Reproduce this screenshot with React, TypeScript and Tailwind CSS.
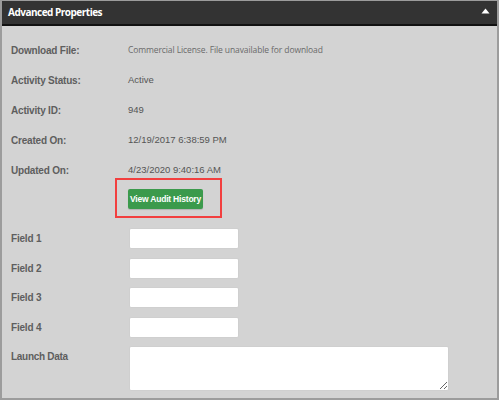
import React from 'react';

const info = [
  { label: 'Download File:', value: 'Commercial License. File unavailable for download', small: true },
  { label: 'Activity Status:', value: 'Active' },
  { label: 'Activity ID:', value: '949' },
  { label: 'Created On:', value: '12/19/2017 6:38:59 PM' },
  { label: 'Updated On:', value: '4/23/2020 9:40:16 AM' },
];

const fields = ['Field 1', 'Field 2', 'Field 3', 'Field 4'];

export default function App() {
  return (
    <div className="w-[499px] h-[401px] overflow-hidden bg-white">
      <div className="w-[499px] h-[400px] border-2 border-t border-[#9c9c9c] bg-[#d3d3d3] flex flex-col">
        {/* header */}
        <div className="h-[25px] shrink-0 bg-[#333333] border-b-2 border-[#111111] flex items-center justify-between pl-[6px] pr-[6px]">
          <span className="text-white font-bold text-[10px] tracking-[-0.5px] font-['Open_Sans',sans-serif]">
            Advanced Properties
          </span>
          <svg width="9" height="6" viewBox="0 0 9 6" className="mr-[1px] mb-[3px]">
            <path d="M0.5 5.5 L4.5 0.5 L8.5 5.5 Z" fill="#ffffff" />
          </svg>
        </div>

        {/* body */}
        <div className="pl-[9px] pt-[9px] font-['Liberation_Sans',Arial,sans-serif]">
          {info.map((row) => (
            <div key={row.label} className="grid grid-cols-[117px_1fr] h-[30px] items-center">
              <span className="text-[10px] font-bold tracking-[-0.2px] text-[#5e5e5e]">{row.label}</span>
              <span
                className={
                  row.small
                    ? "text-[8.5px] text-[#6a6a6a] font-['Open_Sans',sans-serif] tracking-[-0.1px]"
                    : 'text-[9.5px] text-[#555555]'
                }
              >
                {row.value}
              </span>
            </div>
          ))}

          <div className="grid grid-cols-[117px_1fr] mt-[4px]">
            <span />
            <div className="relative w-fit flex">
              <button
                type="button"
                className="h-[20px] w-[75px] rounded-[2px] bg-[#3b9a4c] text-white text-[8.5px] font-bold tracking-[-0.2px] shadow-[0_1px_1px_rgba(0,0,0,0.15)]"
              >
                View Audit History
              </button>
              <div className="absolute left-[-13px] top-[-11px] w-[107px] h-[40px] border-2 border-[#f23f3f] pointer-events-none" />
            </div>
          </div>

          <div className="mt-[19px] flex flex-col gap-[8.5px]">
            {fields.map((f) => (
              <div key={f} className="grid grid-cols-[118px_1fr] items-center">
                <span className="text-[10px] font-bold tracking-[-0.2px] text-[#5e5e5e]">{f}</span>
                <input
                  type="text"
                  className="w-[110px] h-[21px] bg-white border border-[#cfcfcf] rounded-[2px] outline-none"
                />
              </div>
            ))}
            <div className="grid grid-cols-[118px_1fr] items-start">
              <span className="text-[10px] font-bold tracking-[-0.3px] text-[#5e5e5e] h-[21px] flex items-center">
                Launch Data
              </span>
              <textarea className="w-[320px] h-[45px] bg-white border border-[#cfcfcf] rounded-[2px] outline-none" />
            </div>
          </div>
        </div>
      </div>
    </div>
  );
}
